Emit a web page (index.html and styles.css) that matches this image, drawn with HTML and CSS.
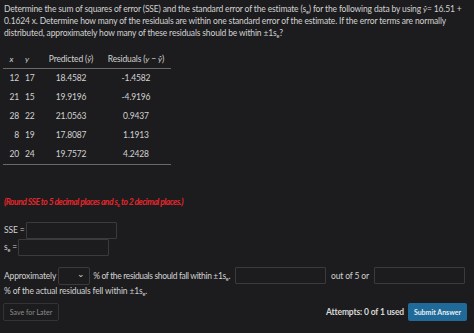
FILE: index.html
```html
<!DOCTYPE html>
<html lang="en">
<head>
    <meta charset="UTF-8">
    <title>Residuals question</title>
    <link rel="stylesheet" href="styles.css">
</head>
<body>
    <div class="question">
        <p class="prompt">
            Determine the sum of squares of error (SSE) and the standard error of the estimate (s<sub>e</sub>) for the following data by using <i>ŷ</i>= 16.51 + 0.1624 x. Determine how many of the residuals are within one standard error of the estimate. If the error terms are normally distributed, approximately how many of these residuals should be within ±1s<sub>e</sub>?
        </p>

        <table class="data-table">
            <thead>
                <tr>
                    <th class="col-x"><i>x</i></th>
                    <th class="col-y"><i>y</i></th>
                    <th class="col-pred">Predicted (<i>ŷ</i>)</th>
                    <th class="col-res">Residuals (<i>y</i> − <i>ŷ</i>)</th>
                </tr>
            </thead>
            <tbody>
                <tr><td class="col-x">12</td><td class="col-y">17</td><td class="col-pred">18.4582</td><td class="col-res">-1.4582</td></tr>
                <tr><td class="col-x">21</td><td class="col-y">15</td><td class="col-pred">19.9196</td><td class="col-res">-4.9196</td></tr>
                <tr><td class="col-x">28</td><td class="col-y">22</td><td class="col-pred">21.0563</td><td class="col-res">0.9437</td></tr>
                <tr><td class="col-x">8</td><td class="col-y">19</td><td class="col-pred">17.8087</td><td class="col-res">1.1913</td></tr>
                <tr><td class="col-x">20</td><td class="col-y">24</td><td class="col-pred">19.7572</td><td class="col-res">4.2428</td></tr>
            </tbody>
        </table>

        <p class="hint">(Round SSE to 5 decimal places and s<sub>e</sub> to 2 decimal places.)</p>

        <div class="answer-row sse-row">
            <label>SSE =</label>
            <input type="text" class="answer-box">
        </div>
        <div class="answer-row">
            <label>s<sub>e</sub> =</label>
            <input type="text" class="answer-box">
        </div>

        <div class="approx-row">
            <span>Approximately</span>
            <div class="select-box"><span class="chevron">&#8964;</span></div>
            <span class="within">% of the residuals should fall within ±1s<sub>e</sub>.</span>
            <input type="text" class="answer-box">
            <span>out of 5 or</span>
            <input type="text" class="answer-box">
        </div>
        <p class="approx-tail">% of the actual residuals fell within ±1s<sub>e</sub>.</p>

        <div class="footer">
            <button class="save-button">Save for Later</button>
            <div class="footer-right">
                <span class="attempts">Attempts: 0 of 1 used</span>
                <button class="submit-button">Submit Answer</button>
            </div>
        </div>
    </div>
</body>
</html>
```

FILE: styles.css
```css
* {
    margin: 0;
    padding: 0;
    box-sizing: border-box;
}

body {
    font-family: Lato, "Liberation Sans", sans-serif;
    font-size: 8.5px;
    letter-spacing: -0.15px;
    background-color: #1c1c1e;
    color: #d2d2d2;
    line-height: 12px;
}

.question {
    padding: 3px 4px 0 4px;
}

sub {
    font-size: 5.5px;
    line-height: 0;
    vertical-align: -2px;
}

.prompt {
    margin-bottom: 13px;
}

.data-table {
    border-collapse: collapse;
    margin-left: -1px;
}

.data-table th {
    font-weight: normal;
    height: 16px;
    padding-bottom: 2px;
    border-bottom: 1px solid #6a6a6a;
}

.data-table td {
    height: 19px;
}

.data-table tbody tr:last-child td {
    border-bottom: 1px solid #6a6a6a;
    height: 20px;
}

.col-x {
    width: 17px;
    text-align: right;
    padding-right: 1px;
}

.col-y {
    width: 21px;
    text-align: left;
    padding-left: 5px;
}

.data-table th.col-x {
    text-align: center;
    padding-right: 0;
}

.col-pred {
    width: 60px;
    text-align: center;
}

.col-res {
    width: 70px;
    text-align: center;
}

.hint {
    color: #e4262c;
    font-weight: bold;
    font-style: italic;
    margin-top: 31px;
    letter-spacing: -0.5px;
}

.answer-row {
    display: flex;
    align-items: center;
    gap: 1px;
}

.sse-row {
    margin-top: 14px;
}

.answer-box {
    flex-shrink: 0;
    width: 91px;
    height: 17px;
    background-color: #1c1c1e;
    border: 1px solid #3b3b3d;
    border-radius: 1px;
}

.approx-row {
    display: flex;
    align-items: center;
    margin-top: 11px;
    white-space: nowrap;
}

.select-box {
    flex-shrink: 0;
    width: 32px;
    height: 18px;
    border: 1px solid #3b3b3d;
    border-radius: 2px;
    margin: 0 3px 0 2px;
    display: flex;
    align-items: center;
    justify-content: flex-end;
    padding-right: 4px;
}

.chevron {
    font-size: 9px;
    line-height: 6px;
    margin-top: -4px;
}

.within {
    letter-spacing: -0.35px;
}

.approx-row .answer-box {
    margin: 0 5px;
}

.footer {
    display: flex;
    justify-content: space-between;
    align-items: center;
    margin-top: 6px;
    padding-right: 3px;
    margin-left: -1px;
}

.footer-right {
    display: flex;
    align-items: center;
    gap: 4px;
}

.save-button {
    font-family: inherit;
    font-size: 7px;
    color: #8c8c8c;
    background-color: #1c1c1e;
    border: 1px solid #343436;
    border-radius: 2px;
    width: 56px;
    height: 18px;
}

.attempts {
    font-weight: bold;
    color: #d8d8d8;
}

.submit-button {
    font-family: inherit;
    font-size: 7px;
    font-weight: bold;
    color: #e8eef4;
    background-color: #1f6a99;
    border: none;
    border-radius: 2px;
    width: 59px;
    height: 18px;
}
```
